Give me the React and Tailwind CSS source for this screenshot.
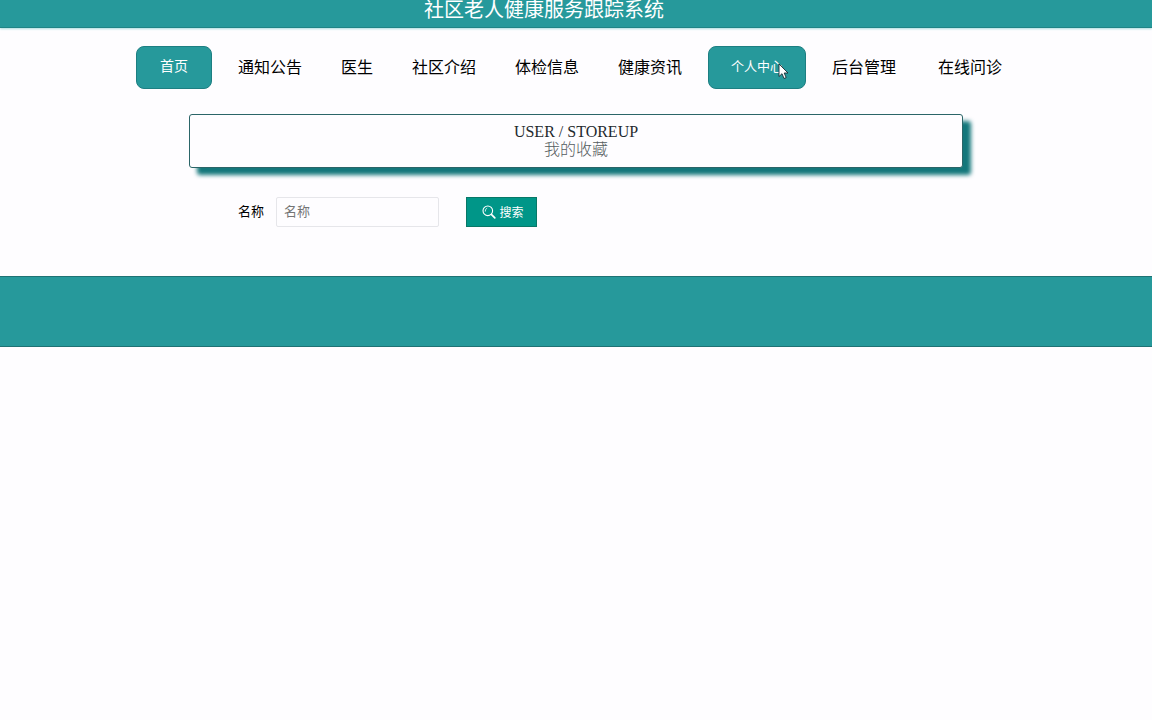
import React from 'react'

const navItems = [
  { label: '首页', type: 'home' },
  { label: '通知公告' },
  { label: '医生' },
  { label: '社区介绍' },
  { label: '体检信息' },
  { label: '健康资讯' },
  { label: '个人中心', type: 'hover' },
  { label: '后台管理' },
  { label: '在线问诊', type: 'chat' },
]

const navStyles = {
  home: 'rounded-lg border border-[#1d7f82] bg-[#26999b] px-[23px] text-[14px] text-white',
  hover: 'rounded-lg border border-[#1d7f82] bg-[#26999b] px-[22px] text-[13px] text-white',
  chat: 'px-4 text-[16px] text-black',
  plain: 'px-[13px] text-[16px] text-black',
}

const Pointer = () => (
  <svg
    className="pointer-events-none absolute top-4 right-4 h-[17px] w-[11px]"
    viewBox="0 0 11 17"
    aria-hidden="true"
  >
    <path
      d="M1 1v12.5l3-2.8 2 4.8 2.2-.9-2-4.6H10z"
      fill="#fff"
      stroke="#1c2b33"
      strokeWidth="0.9"
      strokeLinejoin="round"
    />
  </svg>
)

const SearchIcon = () => (
  <svg className="h-[14px] w-[14px]" viewBox="0 0 14 14" fill="none" stroke="currentColor" aria-hidden="true">
    <circle cx="5.8" cy="5.8" r="4.8" strokeWidth="1.1" />
    <path d="M3.2 6.2a2.8 2.8 0 0 1 1.6-2.9" strokeWidth="0.8" strokeLinecap="round" />
    <path d="M9.6 9.6l3.2 3.2" strokeWidth="1.7" strokeLinecap="round" />
  </svg>
)

const App = () => {
  return (
    <div className="min-h-screen bg-[#fefdff] font-['Noto_Sans_CJK_SC',sans-serif]">
      <header className="border-b border-[#1f8486] bg-[#26999b] pr-16 pb-[9px] text-center shadow-[0_1px_2px_#a9dcdd]">
        <h1 className="text-[20px] leading-[18px] text-white">社区老人健康服务跟踪系统</h1>
      </header>

      <nav className="mx-auto mt-[18px] flex max-w-[880px] gap-[13px]">
        {navItems.map(item => (
          <a
            key={item.label}
            href="#"
            className={`relative flex h-[43px] items-center pb-1 whitespace-nowrap ${navStyles[item.type || 'plain']}`}
          >
            {item.label}
            {item.type === 'hover' && <Pointer />}
          </a>
        ))}
      </nav>

      <main className="mx-auto max-w-[774px]">
        <div className="mt-[25px] rounded-[3px] border border-[#2b6568] bg-[#fefdff] py-2 text-center font-['Liberation_Serif','Noto_Sans_CJK_SC',serif] text-[16px] leading-[18px] shadow-[8px_7px_4px_#14777b]">
          <p className="text-[#1f2a2e]">USER / STOREUP</p>
          <h2 className="font-light text-[#555c60]">我的收藏</h2>
        </div>

        <form className="mt-[29px] flex items-center pl-[49px]" onSubmit={e => e.preventDefault()}>
          <label htmlFor="name" className="pb-[2px] text-[13px] text-black">
            名称
          </label>
          <input
            id="name"
            type="text"
            placeholder="名称"
            className="ml-3 h-[30px] w-[163px] rounded-xs border border-[#e6e6ea] bg-transparent px-[7px] pb-[3px] text-[13px] placeholder:text-[#757575] focus:outline-none"
          />
          <button
            type="submit"
            className="ml-[27px] flex h-[30px] w-[71px] items-center justify-center gap-1 border border-[#087867] bg-[#009688] pl-[2px] text-[12px] text-white"
          >
            <SearchIcon />
            搜索
          </button>
        </form>
      </main>

      <footer className="mt-[49px] h-[71px] border-y border-[#1f7274] bg-[#26999b]" />
    </div>
  )
}

export default App
